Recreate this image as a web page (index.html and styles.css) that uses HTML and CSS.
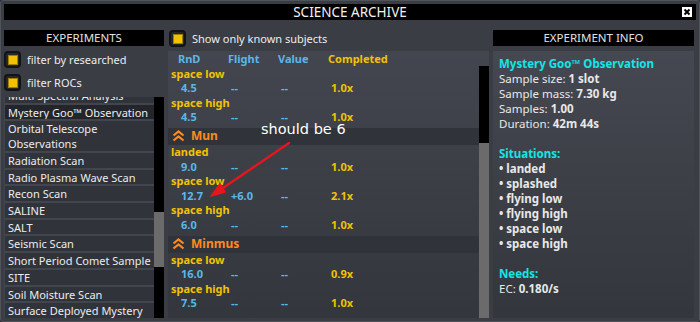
FILE: index.html
```html
<!DOCTYPE html>
<html lang="en">

<head>
  <meta charset="UTF-8">
  <meta name="viewport" content="width=device-width, initial-scale=1.0">
  <title>science-archive</title>

  <link rel="stylesheet" href="styles.css">
</head>

<body>
  <div class="window">
    <div class="titlebar">
      <span class="title">SCIENCE ARCHIVE</span>
      <span class="close">
        <svg width="10" height="10" viewBox="0 0 10 10">
          <path d="M2.5 2.5 L7.5 7.5 M7.5 2.5 L2.5 7.5" stroke="#000" stroke-width="2" />
        </svg>
      </span>
    </div>

    <div class="columns">
      <div class="col col-left">
        <div class="header">EXPERIMENTS</div>
        <div class="check"><span class="box"></span>filter by researched</div>
        <div class="check"><span class="box"></span>filter ROCs</div>
        <div class="list-wrap">
          <ul class="list">
            <li>Multi Spectral Analysis</li>
            <li class="selected">Mystery Goo™ Observation</li>
            <li>Orbital Telescope<br>Observations</li>
            <li>Radiation Scan</li>
            <li>Radio Plasma Wave Scan</li>
            <li>Recon Scan</li>
            <li>SALINE</li>
            <li>SALT</li>
            <li>Seismic Scan</li>
            <li>Short Period Comet Sample</li>
            <li>SITE</li>
            <li>Soil Moisture Scan</li>
            <li>Surface Deployed Mystery</li>
          </ul>
          <div class="scrollbar list-scroll"><div class="thumb"></div></div>
        </div>
      </div>

      <div class="col col-mid">
        <div class="check"><span class="box"></span>Show only known subjects</div>
        <div class="table-wrap">
          <div class="table">
            <div class="row head">
              <span class="rnd">RnD</span>
              <span class="rnd">Flight</span>
              <span class="rnd">Value</span>
              <span class="done">Completed</span>
            </div>

            <div class="group">
              <div class="situation">space low</div>
              <div class="row vals"><span>4.5</span><span>--</span><span>--</span><span class="done">1.0x</span></div>
              <div class="situation">space high</div>
              <div class="row vals"><span>4.5</span><span>--</span><span>--</span><span class="done">1.0x</span></div>
            </div>

            <div class="body-band">
              <svg class="chev" width="13" height="12" viewBox="0 0 13 12">
                <path d="M1.5 5.5 L6.5 1.5 L11.5 5.5 M1.5 10.5 L6.5 6.5 L11.5 10.5" fill="none" stroke="#ff8a1e" stroke-width="2.2" />
              </svg>
              Mun
            </div>
            <div class="group">
              <div class="situation">landed</div>
              <div class="row vals"><span>9.0</span><span>--</span><span>--</span><span class="done">1.0x</span></div>
              <div class="situation">space low</div>
              <div class="row vals"><span>12.7</span><span>+6.0</span><span>--</span><span class="done">2.1x</span></div>
              <div class="situation">space high</div>
              <div class="row vals"><span>6.0</span><span>--</span><span>--</span><span class="done">1.0x</span></div>
            </div>

            <div class="body-band">
              <svg class="chev" width="13" height="12" viewBox="0 0 13 12">
                <path d="M1.5 5.5 L6.5 1.5 L11.5 5.5 M1.5 10.5 L6.5 6.5 L11.5 10.5" fill="none" stroke="#ff8a1e" stroke-width="2.2" />
              </svg>
              Minmus
            </div>
            <div class="group">
              <div class="situation">space low</div>
              <div class="row vals"><span>16.0</span><span>--</span><span>--</span><span class="done">0.9x</span></div>
              <div class="situation">space high</div>
              <div class="row vals"><span>7.5</span><span>--</span><span>--</span><span class="done">1.0x</span></div>
            </div>
          </div>
          <div class="scrollbar table-scroll"><div class="thumb"></div></div>

          <!-- annotation drawn over the screenshot -->
          <div class="note">should be 6</div>
          <svg class="arrow" width="90" height="64" viewBox="0 0 90 64">
            <line x1="81" y1="3" x2="12" y2="50" stroke="#e8141e" stroke-width="2.4" stroke-linecap="round" />
            <path d="M3 56 L12 44 L17 52 Z" fill="#e8141e" stroke="#e8141e" stroke-width="1.5" stroke-linejoin="round" />
          </svg>
        </div>
      </div>

      <div class="col col-right">
        <div class="header">EXPERIMENT INFO</div>
        <div class="info">
          <div class="cyan">Mystery Goo™ Observation</div>
          <div>Sample size: <b>1 slot</b></div>
          <div>Sample mass: <b>7.30 kg</b></div>
          <div>Samples: <b>1.00</b></div>
          <div>Duration: <b>42m 44s</b></div>
          <div class="spacer"></div>
          <div class="cyan">Situations:</div>
          <div><b>• landed</b></div>
          <div><b>• splashed</b></div>
          <div><b>• flying low</b></div>
          <div><b>• flying high</b></div>
          <div><b>• space low</b></div>
          <div><b>• space high</b></div>
          <div class="spacer"></div>
          <div class="cyan">Needs:</div>
          <div>EC: <b>0.180/s</b></div>
        </div>
      </div>
    </div>
  </div>
</body>

</html>
```

FILE: styles.css
```css
* {
  box-sizing: border-box;
}

html,
body {
  height: 100%;
}

body {
  margin: 0;
  background: #2b2d31;
  font-family: "Noto Sans", "DejaVu Sans", sans-serif;
  color: #e6e6e6;
  overflow: hidden;
}

.window {
  width: 700px;
  height: 322px;
  background: #3a3d44;
  border: 1px solid #50535a;
  border-radius: 3px;
  padding: 3px 3px 0 3px;
}

.titlebar {
  height: 16px;
  background: #000;
  display: flex;
  align-items: center;
  justify-content: center;
  position: relative;
}

.title {
  font-size: 13.5px;
  color: #f2f2f2;
  line-height: 16px;
}

.close {
  position: absolute;
  right: 4px;
  top: 3px;
  width: 10px;
  height: 10px;
  background: #fff;
  display: flex;
}

.columns {
  display: flex;
  gap: 4px;
  margin-top: 10px;
}

.col-left {
  width: 160px;
}

.col-mid {
  width: 321px;
}

.col-right {
  width: 201px;
}

.header {
  height: 16px;
  background: #000;
  text-align: center;
  font-size: 11.5px;
  line-height: 16px;
  color: #e0e0e0;
}

.check {
  display: flex;
  align-items: center;
  gap: 6px;
  height: 17px;
  font-size: 11px;
  color: #ececec;
}

.col-left .check {
  margin-top: 5px;
}

.col-left .check + .check {
  margin-top: 6px;
}

.col-mid .check {
  padding-left: 1px;
}

.box {
  width: 17px;
  height: 17px;
  border-radius: 4px;
  background: #25272b;
  border: 2px solid #121315;
  display: flex;
  align-items: center;
  justify-content: center;
  flex-shrink: 0;
}

.box::after {
  content: "";
  width: 8px;
  height: 8px;
  background: #f2c200;
  border: 1px solid #a07e00;
}

/* experiment list */

.list-wrap {
  margin-top: 6px;
  height: 221px;
  overflow: hidden;
  display: flex;
  background: #42454c;
  padding-left: 1px;
}

.list {
  list-style: none;
  margin: -9px 0 0 0;
  padding: 0;
  flex: 1;
  min-width: 0;
  display: flex;
  flex-direction: column;
  gap: 2px;
}

.list li {
  background: #30333a;
  font-size: 11px;
  line-height: 15px;
  padding-left: 3px;
  color: #ececec;
  white-space: nowrap;
  overflow: hidden;
}

.list li.selected {
  background: #23252a;
}

.scrollbar {
  width: 10px;
  background: #000;
  display: flex;
  flex-direction: column;
}

.list-scroll .thumb {
  margin-top: 115px;
  height: 55px;
  background: #6b6b6b;
}

/* subjects table */

.table-wrap {
  margin-top: 4px;
  height: 267px;
  display: flex;
  position: relative;
  background: linear-gradient(#43464e, #33363c);
}

.table {
  flex: 1;
  padding-top: 1px;
  font-weight: bold;
  font-size: 11px;
  line-height: 14.6px;
}

.row {
  display: grid;
  grid-template-columns: 50px 50px 50px 60px;
  padding-left: 10px;
}

.row.vals {
  padding-left: 13px;
  color: #5ab7ea;
}

.rnd {
  color: #5ab7ea;
}

.done {
  color: #f2c200;
}

.situation {
  color: #f2c200;
  padding-left: 3px;
}

.group {
  margin-bottom: 3px;
}

.body-band {
  height: 17px;
  background: #30333a;
  color: #ff8a1e;
  font-size: 12px;
  display: flex;
  align-items: center;
  gap: 6px;
  padding-left: 4px;
}

.table-scroll {
  margin-top: 15px;
}

.table-scroll .thumb {
  margin-top: 77px;
  flex: 1;
  background: #6b6b6b;
}

.note {
  position: absolute;
  left: 93px;
  top: 70px;
  font-size: 14.5px;
  color: #fff;
  font-family: "DejaVu Sans", sans-serif;
}

.arrow {
  position: absolute;
  left: 40px;
  top: 89px;
}

/* info panel */

.info {
  margin-top: 5px;
  height: 267px;
  background: linear-gradient(#454850, #33363c);
  padding: 5px 6px;
  font-size: 11.5px;
  line-height: 15px;
  color: #e8e8e8;
}

.info .cyan {
  color: #14e6e6;
  font-weight: bold;
}

.spacer {
  height: 15px;
}
```
